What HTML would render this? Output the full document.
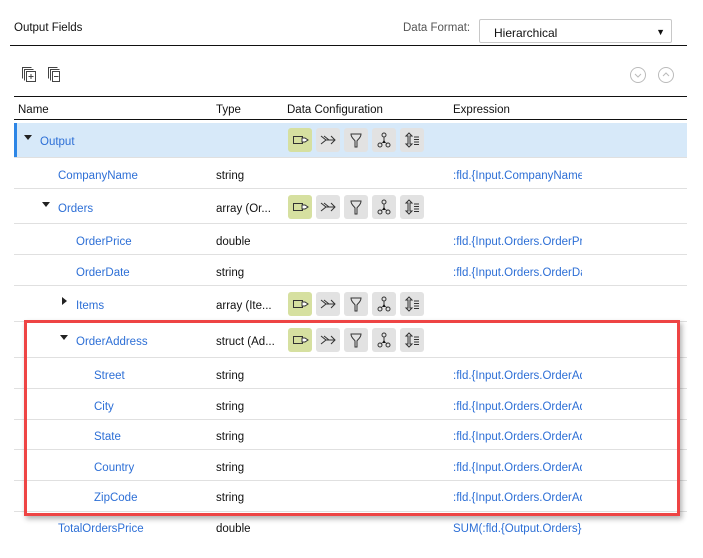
<!DOCTYPE html>
<html><head><style>
*{margin:0;padding:0;box-sizing:border-box}
body{width:703px;height:558px;background:#fff;font-family:"Liberation Sans",sans-serif;font-size:11.5px;color:#111;position:relative;overflow:hidden}
.a{position:absolute;white-space:nowrap}
.t{margin-top:2px}
.ln{position:absolute;left:14px;width:673px;height:1px;background:#e0e0e0}
.bl{color:#2d6fd6}
.btn{position:absolute;width:24px;height:24px;background:#e2e2e2;border-radius:3px}
.btn.g{background:#d6e0a0}
.btn svg{position:absolute;left:2px;top:2px}
.tri{position:absolute;width:0;height:0}
.td{border-left:4px solid transparent;border-right:4px solid transparent;border-top:5px solid #222}
.tr{border-top:4px solid transparent;border-bottom:4px solid transparent;border-left:5px solid #222}
</style></head><body>
<div class="a" style="left:14px;top:22px">Output Fields</div>
<div class="a" style="left:403px;top:22px;color:#555">Data Format:</div>
<div class="a" style="left:479px;top:19px;width:193px;height:24px;border:1px solid #c8c8c8;border-radius:2px"><span class="a" style="left:14px;top:6px;font-size:12px">Hierarchical</span><span class="a" style="right:6px;top:7px;font-size:9px">▼</span></div>
<div class="a" style="left:10px;top:45px;width:677px;height:1px;background:#111"></div>
<svg class="a" style="left:20px;top:66px" width="40" height="18" viewBox="0 0 40 18" fill="none" stroke="#444" stroke-width="1"><path d="M2.5 12.5V1.5h9M4.5 14.5V3.5h9"/><rect x="6.5" y="5.5" width="9" height="10"/><path d="M8.5 10.5h5M11 8v5"/><path d="M30.5 12.5V1.5h9M32.5 14.5V3.5h9" transform="translate(-2 0)"/><rect x="32.5" y="5.5" width="7" height="10"/><path d="M34 10.5h4.5"/></svg>
<svg class="a" style="left:629px;top:66px" width="48" height="18" fill="none" stroke="#bbb"><circle cx="9" cy="9" r="7.5"/><path d="M6 8l3 3 3-3"/><circle cx="37" cy="9" r="7.5"/><path d="M34 10l3-3 3 3"/></svg>
<div class="a" style="left:14px;top:96px;width:673px;height:1px;background:#111"></div>
<div class="a t" style="left:18px;top:102px">Name</div><div class="a t" style="left:216px;top:102px">Type</div><div class="a t" style="left:287px;top:102px">Data Configuration</div><div class="a t" style="left:453px;top:102px">Expression</div>
<div class="a" style="left:14px;top:119px;width:673px;height:1px;background:#111"></div>
<div class="a" style="left:14px;top:123px;width:673px;height:34px;background:#d7e9f9;border-left:3px solid #2d86e6"></div>
<div class="tri td" style="left:24px;top:135px"></div><div class="a bl t" style="left:40px;top:134px">Output</div>

<div class="ln" style="top:157px"></div>
<div class="a bl t" style="left:58px;top:168px">CompanyName</div><div class="a t" style="left:216px;top:168px">string</div><div class="a bl t" style="left:453px;top:168px;width:129px;overflow:hidden">:fld.{Input.CompanyName}</div>
<div class="ln" style="top:188px"></div>
<div class="tri td" style="left:42px;top:202px"></div><div class="a bl t" style="left:58px;top:201px">Orders</div><div class="a t" style="left:216px;top:201px">array (Or...</div>
<div class="ln" style="top:223px"></div>
<div class="a bl t" style="left:76px;top:234px">OrderPrice</div><div class="a t" style="left:216px;top:234px">double</div><div class="a bl t" style="left:453px;top:234px;width:129px;overflow:hidden">:fld.{Input.Orders.OrderPrice}</div>
<div class="ln" style="top:254px"></div>
<div class="a bl t" style="left:76px;top:265px">OrderDate</div><div class="a t" style="left:216px;top:265px">string</div><div class="a bl t" style="left:453px;top:265px;width:129px;overflow:hidden">:fld.{Input.Orders.OrderDate}</div>
<div class="ln" style="top:285px"></div>
<div class="tri tr" style="left:62px;top:297px"></div><div class="a bl t" style="left:76px;top:298px">Items</div><div class="a t" style="left:216px;top:298px">array (Ite...</div>
<div class="ln" style="top:321px"></div>
<div class="tri td" style="left:60px;top:335px"></div><div class="a bl t" style="left:76px;top:334px">OrderAddress</div><div class="a t" style="left:216px;top:334px">struct (Ad...</div>
<div class="ln" style="top:357px"></div>
<div class="a bl t" style="left:94px;top:368px">Street</div><div class="a t" style="left:216px;top:368px">string</div><div class="a bl t" style="left:453px;top:368px;width:129px;overflow:hidden">:fld.{Input.Orders.OrderAddress}</div>
<div class="ln" style="top:388px"></div>
<div class="a bl t" style="left:94px;top:399px">City</div><div class="a t" style="left:216px;top:399px">string</div><div class="a bl t" style="left:453px;top:399px;width:129px;overflow:hidden">:fld.{Input.Orders.OrderAddress}</div>
<div class="ln" style="top:419px"></div>
<div class="a bl t" style="left:94px;top:429px">State</div><div class="a t" style="left:216px;top:429px">string</div><div class="a bl t" style="left:453px;top:429px;width:129px;overflow:hidden">:fld.{Input.Orders.OrderAddress}</div>
<div class="ln" style="top:449px"></div>
<div class="a bl t" style="left:94px;top:460px">Country</div><div class="a t" style="left:216px;top:460px">string</div><div class="a bl t" style="left:453px;top:460px;width:129px;overflow:hidden">:fld.{Input.Orders.OrderAddress}</div>
<div class="ln" style="top:480px"></div>
<div class="a bl t" style="left:94px;top:490px">ZipCode</div><div class="a t" style="left:216px;top:490px">string</div><div class="a bl t" style="left:453px;top:490px;width:129px;overflow:hidden">:fld.{Input.Orders.OrderAddress}</div>
<div class="ln" style="top:511px"></div>
<div class="a bl t" style="left:58px;top:521px">TotalOrdersPrice</div><div class="a t" style="left:216px;top:521px">double</div><div class="a bl t" style="left:453px;top:521px;width:129px;overflow:hidden">SUM(:fld.{Output.Orders}</div>

<div class="a" style="left:24px;top:320px;width:656px;height:196px;border:3px solid #ee4444;box-shadow:2px 3px 5px rgba(0,0,0,.3)"></div>

<div id="bt"></div>
<script>
var ys=[128,195,292,328];var h='';
var ic=['<rect x="3.5" y="6.5" width="9" height="7" fill="none" stroke="#333"/><path d="M12 8h3l3 2-3 2h-3z" fill="#fff" stroke="#333"/>',
'<path d="M3 6l5 4-5 4M8 10h9M13 6l4 4-4 4M6 6l5 4" fill="none" stroke="#333"/>',
'<path d="M5 4h10c0 4-4 6-4 7v6h-2v-6c0-1-4-3-4-7z" fill="none" stroke="#333"/>',
'<circle cx="10" cy="5" r="2" fill="none" stroke="#333"/><circle cx="6" cy="15" r="2" fill="none" stroke="#333"/><circle cx="14" cy="15" r="2" fill="none" stroke="#333"/><path d="M10 7v4M8 13l-1 1M12 13l1 1" stroke="#333"/><path d="M8 13l2-3 2 3z" fill="#111"/>',
'<path d="M7 3l-3 3h2v8h-2l3 3 3-3h-2V6h2z" fill="none" stroke="#333"/><path d="M12 7h5M12 9.5h5M12 12h5M12 14.5h5" stroke="#333"/>'];
ys.forEach(function(y){for(var i=0;i<5;i++){h+='<div class="btn'+(i==0?' g':'')+'" style="left:'+(288+i*28)+'px;top:'+y+'px"><svg width="20" height="20" viewBox="0 0 20 20">'+ic[i]+'</svg></div>';}});
document.getElementById('bt').innerHTML=h;
</script>
</body></html>
